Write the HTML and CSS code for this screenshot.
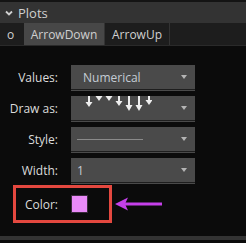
FILE: index.html
```html
<!DOCTYPE html>
<html lang="en">
<head>
  <meta charset="UTF-8" />
  <title>Plots</title>
  <link rel="stylesheet" href="styles.css">
</head>
<body>
  <div class="top-strip"></div>
  <div class="header">
    <svg class="chevron" width="8" height="6" viewBox="0 0 8 6"><path d="M1 1.5 L4 4.5 L7 1.5" fill="none" stroke="#cfcfcf" stroke-width="1.8"/></svg>
    <span>Plots</span>
  </div>
  <div class="tabs">
    <div class="tab tab-o">o</div>
    <div class="tab tab-down active">ArrowDown</div>
    <div class="tab tab-up">ArrowUp</div>
  </div>

  <div class="form">
    <div class="row">
      <label>Values:</label>
      <div class="select"><span class="value values-text">Numerical</span><span class="caret"></span></div>
    </div>
    <div class="row">
      <label>Draw as:</label>
      <div class="select">
        <svg class="arrows" width="80" height="24" viewBox="0 0 80 24">
          <g fill="#eeeeee">
            <rect x="16" y="0" width="2" height="6"/><path d="M13.5 6 H20.5 L17 11 Z"/>
            <path d="M23.5 0 H30.5 L27 5 Z"/>
            <path d="M33.5 0 H40.5 L37 5 Z"/>
            <rect x="46" y="0" width="2" height="5"/><path d="M43.5 5 H50.5 L47 10 Z"/>
            <rect x="56" y="0" width="2" height="10"/><path d="M53.5 9 H60.5 L57 15 Z"/>
            <rect x="66" y="0" width="2" height="10"/><path d="M63.5 9 H70.5 L67 15 Z"/>
            <rect x="76" y="0" width="2" height="4"/><path d="M73.5 4 H80.5 L77 9 Z"/>
          </g>
        </svg>
        <span class="caret"></span>
      </div>
    </div>
    <div class="row">
      <label>Style:</label>
      <div class="select"><span class="style-line"></span><span class="caret"></span></div>
    </div>
    <div class="row">
      <label>Width:</label>
      <div class="select"><span class="value">1</span><span class="caret"></span></div>
    </div>

    <div class="color-row">
      <div class="highlight">
        <label>Color:</label>
        <span class="swatch"></span>
      </div>
      <svg class="pointer" width="48" height="14" viewBox="0 0 48 14">
        <rect x="8" y="5.5" width="39" height="3" fill="#c540ea"/>
        <path d="M0 7 L13 0.5 L10 7 L13 13.5 Z" fill="#c540ea"/>
      </svg>
    </div>
  </div>

  <div class="bottom-strip"></div>
</body>
</html>
```

FILE: styles.css
```css
body {
  margin: 0;
  padding: 0;
  width: 246px;
  height: 243px;
  overflow: hidden;
  background-color: #0b0b0b;
  font-family: 'Open Sans', 'Noto Sans', sans-serif;
  font-size: 12px;
  color: #d6d6d6;
}

.top-strip {
  height: 2px;
  background-color: #141414;
}

.header {
  height: 21px;
  display: flex;
  align-items: center;
  padding-left: 5px;
  background-color: #333333;
  color: #d0d0d0;
  font-size: 13px;
}

.chevron {
  margin-right: 5px;
}

.tabs {
  display: flex;
  height: 22px;
  background-color: #1d1d1d;
  border-bottom: 1px solid #2a2a2a;
}

.tab {
  display: flex;
  align-items: center;
  justify-content: center;
  box-sizing: border-box;
  border-right: 1px solid #333333;
  color: #d0d0d0;
  font-size: 12px;
}

.tab-o {
  width: 24px;
  justify-content: flex-start;
  padding-left: 7px;
  border-right: none;
}

.tab-down {
  width: 81px;
}

.tab-up {
  width: 65px;
}

.tab.active {
  background-color: #474747;
}

.form {
  padding-top: 19px;
  display: flex;
  flex-direction: column;
  gap: 6px;
}

.row {
  display: grid;
  grid-template-columns: 58px 124px;
  column-gap: 13px;
  align-items: center;
}

label {
  text-align: right;
  color: #dcdcdc;
}

.select {
  height: 24px;
  display: flex;
  align-items: center;
  background-color: #4a4a4a;
  border-bottom: 1px solid #1e1e1e;
  box-shadow: 0 1px 0 #4a4a4a;
  overflow: hidden;
}

.value {
  padding-left: 6px;
  color: #c4ccd4;
}

.values-text {
  padding-left: 12px;
}

.arrows {
  align-self: flex-start;
  margin-left: 1px;
}

.style-line {
  margin-left: 6px;
  width: 66px;
  height: 1px;
  background-color: #8a8a8a;
}

.caret {
  margin-left: auto;
  margin-right: 8px;
  width: 0;
  height: 0;
  border-left: 3.5px solid transparent;
  border-right: 3.5px solid transparent;
  border-top: 4px solid #b4b4b4;
}

.color-row {
  display: flex;
  align-items: center;
  margin-top: -4px;
}

.highlight {
  margin-left: 13px;
  width: 99px;
  height: 38px;
  box-sizing: border-box;
  border: 3px solid #e4483f;
  display: flex;
  align-items: center;
}

.highlight label {
  width: 42px;
}

.swatch {
  margin-left: 14px;
  width: 15px;
  height: 16px;
  background-color: #e98af8;
  outline: 1px solid #3a2a3c;
}

.pointer {
  margin-left: 3px;
}

.bottom-strip {
  margin-top: 13px;
  height: 4px;
  background-color: #333333;
}
```
